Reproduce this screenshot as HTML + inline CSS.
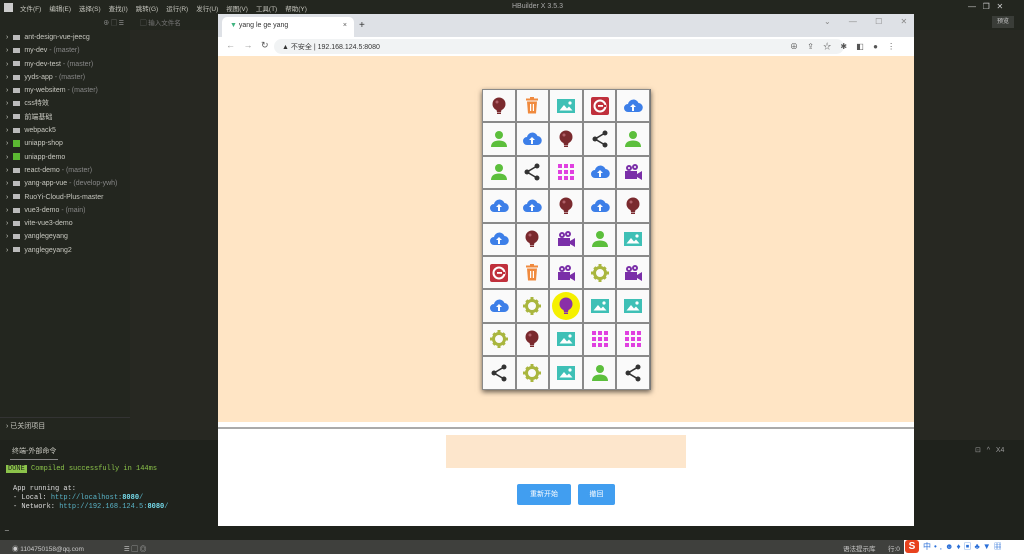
<!DOCTYPE html>
<html><head><meta charset="utf-8"><style>
*{margin:0;padding:0;box-sizing:border-box}
body{width:1024px;height:554px;overflow:hidden;background:#272822;font-family:"Liberation Sans","Noto Sans CJK SC",sans-serif;font-size:7px;color:#c8c8c0;position:relative}
.a{position:absolute}
.menu{left:0;top:0;width:1024px;height:14px;background:#23261f}
.menu span{margin-right:8px}
.side{left:0;top:14px;width:130px;height:426px;background:#23261f}
.tree div{height:13.3px;line-height:13.3px;padding-left:6px;white-space:nowrap}
.tree i{display:inline-block;width:7px;height:5px;background:#bbb;margin:0 4px 0 5px;vertical-align:middle}
.tree i.g{background:#5cb832;height:7px}
.tree b{font-weight:normal;color:#888}
.cell{position:absolute;width:33.6px;height:33.4px;background:#fafafa;border:1px solid #8a8a8a;display:flex;align-items:center;justify-content:center}
.cell svg{width:20px;height:20px}
.mono{font-family:"Liberation Mono",monospace;font-size:7px}
</style></head><body>
<svg width="0" height="0" style="position:absolute"><defs>
<symbol id="bulb" viewBox="0 0 20 20"><circle cx="10" cy="8" r="6.5" fill="#7a2a2e"/><path d="M7 12h6l-1 4H8z" fill="#7a2a2e"/><rect x="8" y="16.5" width="4" height="1.5" fill="#7a2a2e"/><circle cx="8" cy="6" r="1.5" fill="#b06068"/></symbol>
<symbol id="trash" viewBox="0 0 20 20"><rect x="4" y="2.5" width="12" height="2" fill="#f08a3e"/><rect x="8" y="1" width="4" height="2" fill="#f08a3e"/><path d="M5 5.5h10l-1 12H6z" fill="#f08a3e"/><rect x="8" y="8" width="1.2" height="7" fill="#fff"/><rect x="10.8" y="8" width="1.2" height="7" fill="#fff"/></symbol>
<symbol id="img" viewBox="0 0 20 20"><rect x="1" y="3" width="18" height="14" fill="#3fc0b6"/><path d="M3.5 14.5l4.5-5.5 3 3.5 2-2 3.5 4z" fill="#fff"/><circle cx="14" cy="7" r="1.6" fill="#fff"/></symbol>
<symbol id="ec" viewBox="0 0 20 20"><rect x="1" y="1" width="18" height="18" rx="2" fill="#c0303c"/><circle cx="10" cy="10" r="5.5" fill="none" stroke="#fff" stroke-width="2"/><rect x="10" y="9" width="6" height="2" fill="#c0303c"/><rect x="8" y="9" width="5" height="1.8" fill="#fff"/></symbol>
<symbol id="cloud" viewBox="0 0 20 20"><path d="M5 16a4 4 0 010-8 5.5 5.5 0 0110.5-1A4.5 4.5 0 0115 16z" fill="#3d7fe8"/><path d="M10 8l3 3h-2v4H9v-4H7z" fill="#fff"/></symbol>
<symbol id="person" viewBox="0 0 20 20"><circle cx="10" cy="6" r="4" fill="#5cbf3c"/><path d="M2 18c0-5 4-6.5 8-6.5s8 1.5 8 6.5z" fill="#5cbf3c"/></symbol>
<symbol id="share" viewBox="0 0 20 20"><path d="M15 4L5 10l10 6" fill="none" stroke="#333" stroke-width="1.6"/><circle cx="15" cy="4" r="2.5" fill="#333"/><circle cx="5" cy="10" r="2.5" fill="#333"/><circle cx="15" cy="16" r="2.5" fill="#333"/></symbol>
<symbol id="grid" viewBox="0 0 20 20"><path d="M2 2h4v4H2zM8 2h4v4H8zM14 2h4v4h-4zM2 8h4v4H2zM8 8h4v4H8zM14 8h4v4h-4zM2 14h4v4H2zM8 14h4v4H8zM14 14h4v4h-4z" fill="#e040e0"/></symbol>
<symbol id="cam" viewBox="0 0 20 20"><circle cx="6" cy="6" r="3" fill="#7a2fa8"/><circle cx="12" cy="5" r="3" fill="#7a2fa8"/><rect x="2" y="9" width="12" height="8" fill="#7a2fa8"/><path d="M14 12l5-3v9l-5-3z" fill="#7a2fa8"/><circle cx="6" cy="6" r="1" fill="#fff"/><circle cx="12" cy="5" r="1" fill="#fff"/></symbol>
<symbol id="gear" viewBox="0 0 20 20"><circle cx="10" cy="10" r="5.5" fill="none" stroke="#a9b63e" stroke-width="3"/><path d="M8.5 1h3v3h-3zM8.5 16h3v3h-3zM1 8.5h3v3H1zM16 8.5h3v3h-3zM3.3 5.4l2.1-2.1 2.1 2.1-2.1 2.1zM12.5 14.6l2.1-2.1 2.1 2.1-2.1 2.1zM12.5 5.4l2.1-2.1 2.1 2.1-2.1 2.1zM3.3 14.6l2.1-2.1 2.1 2.1-2.1 2.1z" fill="#a9b63e"/></symbol>
<symbol id="pbulb" viewBox="0 0 20 20"><circle cx="10" cy="8" r="6.5" fill="#8a2fa8"/><path d="M7 12h6l-1 4H8z" fill="#8a2fa8"/><rect x="8" y="16.5" width="4" height="1.5" fill="#8a2fa8"/></symbol>
</defs></svg>

<div class="a menu"><div class="a" style="left:4px;top:3px;width:9px;height:9px;background:#ccc"></div><div class="a" style="left:20px;top:3px;font-size:6.5px"><span>文件(F)</span><span>编辑(E)</span><span>选择(S)</span><span>查找(I)</span><span>跳转(G)</span><span>运行(R)</span><span>发行(U)</span><span>视图(V)</span><span>工具(T)</span><span>帮助(Y)</span></div>
<div class="a" style="left:512px;top:3px;color:#aaa">HBuilder X 3.5.3</div><div class="a" style="left:968px;top:2px;color:#ccc;font-size:8px">—&nbsp;&nbsp;&nbsp;❐&nbsp;&nbsp;&nbsp;✕</div></div>
<div class="a" style="left:0;top:14px;width:218px;height:16px;background:#23261f;color:#aaa;font-size:8px;padding:3px 8px;word-spacing:9px">⍐ ▢ ‹ › ☆ ⓔ</div>
<div class="a" style="left:140px;top:17px;color:#777;font-size:6.5px">▢ 输入文件名</div>
<div class="a" style="left:914px;top:14px;width:110px;height:16px;background:#23261f"></div>
<div class="a" style="left:992px;top:16px;width:22px;height:12px;background:#3a3d38;color:#ccc;font-size:6px;text-align:center;line-height:12px">预览</div>
<div class="a side"><div style="text-align:right;padding:4px 6px;color:#999;font-size:6px">⊕ ▢ ☰</div>
<div class="tree">
<div>›<i></i>ant-design-vue-jeecg</div><div>›<i></i>my-dev <b>- (master)</b></div><div>›<i></i>my-dev-test <b>- (master)</b></div><div>›<i></i>yyds-app <b>- (master)</b></div><div>›<i></i>my-websitem <b>- (master)</b></div><div>›<i></i>css特效</div><div>›<i></i>前端基础</div><div>›<i></i>webpack5</div><div>›<i class="g"></i>uniapp-shop</div><div>›<i class="g"></i>uniapp-demo</div><div>›<i></i>react-demo <b>- (master)</b></div><div>›<i></i>yang-app-vue <b>- (develop-ywh)</b></div><div>›<i></i>RuoYi-Cloud-Plus-master</div><div>›<i></i>vue3-demo <b>- (main)</b></div><div>›<i></i>vite-vue3-demo</div><div>›<i></i>yanglegeyang</div><div>›<i></i>yanglegeyang2</div>
</div>
<div class="a" style="left:0;top:403px;width:130px;height:14px;border-top:1px solid #333;padding:3px 6px">› 已关闭项目</div></div>
<div class="a" style="left:0;top:440px;width:1024px;height:100px;background:#1f221c"></div>
<div class="a" style="left:10px;top:446px;border-bottom:1px solid #888;padding:0 2px 3px">终端-外部命令</div>
<div class="a mono" style="left:6px;top:465px;color:#8bc34a"><span style="background:#8bc34a;color:#1f221c;padding:0 2px">DONE</span> Compiled successfully in 144ms</div>
<div class="a mono" style="left:13px;top:485px;color:#ddd;line-height:9px">App running at:<br>- Local:   <span style="color:#5ab4c8">http://localhost:<b style="color:#7de">8080</b>/</span><br>- Network: <span style="color:#5ab4c8">http://192.168.124.5:<b style="color:#7de">8080</b>/</span></div>
<div class="a" style="left:5px;top:524px;color:#ddd">_</div>
<div class="a" style="left:975px;top:446px;color:#999;font-size:7px">⊡&nbsp;&nbsp;&nbsp;^&nbsp;&nbsp;&nbsp;X4</div>
<div class="a" style="left:0;top:540px;width:1024px;height:14px;background:#3f403d;color:#ccc;padding:3px 12px;font-size:6.5px">◉ 1104750158@qq.com<span style="margin-left:40px">☰ ▢ ◎</span><span style="position:absolute;left:843px">语法提示库</span><span style="position:absolute;left:888px">行:0</span></div>
<div class="a" style="left:904px;top:540px;width:120px;height:14px;background:#fff"></div>
<div class="a" style="left:905px;top:540px;width:14px;height:13px;background:#e8421e;border-radius:3px;color:#fff;font-weight:bold;font-size:10px;text-align:center;line-height:13px">S</div>
<div class="a" style="left:923px;top:541px;color:#2a6fd8;font-size:8px;letter-spacing:3px">中•,☻♦▣♣▼▦</div>

<div class="a" style="left:218px;top:14px;width:696px;height:512px;background:#fff"></div>
<div class="a" style="left:218px;top:14px;width:696px;height:23px;background:#dee1e6"></div>
<div class="a" style="left:222px;top:17px;width:132px;height:20px;background:#fff;border-radius:5px 5px 0 0;padding:5px 8px;color:#333;font-size:7px"><span style="color:#3fb37f">▼</span> yang le ge yang<span style="position:absolute;right:7px;color:#555">×</span></div>
<div class="a" style="left:359px;top:20px;color:#333;font-size:10px">+</div>
<div class="a" style="left:824px;top:17px;color:#888;font-size:8px;word-spacing:16px">⌄ — ☐ ✕</div>
<div class="a" style="left:218px;top:37px;width:696px;height:19px;background:#fff"></div>
<div class="a" style="left:226px;top:40px;color:#999;font-size:9px;word-spacing:6px">← → <span style="color:#555">↻</span></div>
<div class="a" style="left:274px;top:39px;width:570px;height:15px;background:#f1f3f4;border-radius:8px;padding:3px 8px;color:#333;font-size:7px">▲ 不安全 | 192.168.124.5:8080</div>
<div class="a" style="left:790px;top:41px;color:#555;font-size:8px;word-spacing:7px">⊕ ⇪ ☆ ✱ ◧ ● ⋮</div>
<div class="a" style="left:218px;top:56px;width:696px;height:366px;background:#ffe5c5"></div>
<div class="a" style="left:218px;top:427px;width:696px;height:1.5px;background:#aaa"></div>
<div class="a" style="left:446px;top:435px;width:240px;height:33px;background:#fde6cc"></div>
<div class="a" style="left:517px;top:484px;width:54px;height:21px;background:#419ef0;border-radius:2px;color:#fff;text-align:center;line-height:21px;font-size:7px">重新开始</div>
<div class="a" style="left:578px;top:484px;width:37px;height:21px;background:#419ef0;border-radius:2px;color:#fff;text-align:center;line-height:21px;font-size:7px">撤回</div>

<div class="a" style="left:482px;top:89px;width:169px;height:301px;box-shadow:0 2px 5px rgba(0,0,0,.6);background:#777"></div>
<div class="a" style="left:482px;top:89px">
<div class="cell" style="left:0;top:0"><svg><use href="#bulb"/></svg></div><div class="cell" style="left:33.6px;top:0"><svg><use href="#trash"/></svg></div><div class="cell" style="left:67.2px;top:0"><svg><use href="#img"/></svg></div><div class="cell" style="left:100.8px;top:0"><svg><use href="#ec"/></svg></div><div class="cell" style="left:134.4px;top:0"><svg><use href="#cloud"/></svg></div>
<div class="cell" style="left:0;top:33.4px"><svg><use href="#person"/></svg></div><div class="cell" style="left:33.6px;top:33.4px"><svg><use href="#cloud"/></svg></div><div class="cell" style="left:67.2px;top:33.4px"><svg><use href="#bulb"/></svg></div><div class="cell" style="left:100.8px;top:33.4px"><svg><use href="#share"/></svg></div><div class="cell" style="left:134.4px;top:33.4px"><svg><use href="#person"/></svg></div>
<div class="cell" style="left:0;top:66.8px"><svg><use href="#person"/></svg></div><div class="cell" style="left:33.6px;top:66.8px"><svg><use href="#share"/></svg></div><div class="cell" style="left:67.2px;top:66.8px"><svg><use href="#grid"/></svg></div><div class="cell" style="left:100.8px;top:66.8px"><svg><use href="#cloud"/></svg></div><div class="cell" style="left:134.4px;top:66.8px"><svg><use href="#cam"/></svg></div>
<div class="cell" style="left:0;top:100.2px"><svg><use href="#cloud"/></svg></div><div class="cell" style="left:33.6px;top:100.2px"><svg><use href="#cloud"/></svg></div><div class="cell" style="left:67.2px;top:100.2px"><svg><use href="#bulb"/></svg></div><div class="cell" style="left:100.8px;top:100.2px"><svg><use href="#cloud"/></svg></div><div class="cell" style="left:134.4px;top:100.2px"><svg><use href="#bulb"/></svg></div>
<div class="cell" style="left:0;top:133.6px"><svg><use href="#cloud"/></svg></div><div class="cell" style="left:33.6px;top:133.6px"><svg><use href="#bulb"/></svg></div><div class="cell" style="left:67.2px;top:133.6px"><svg><use href="#cam"/></svg></div><div class="cell" style="left:100.8px;top:133.6px"><svg><use href="#person"/></svg></div><div class="cell" style="left:134.4px;top:133.6px"><svg><use href="#img"/></svg></div>
<div class="cell" style="left:0;top:167px"><svg><use href="#ec"/></svg></div><div class="cell" style="left:33.6px;top:167px"><svg><use href="#trash"/></svg></div><div class="cell" style="left:67.2px;top:167px"><svg><use href="#cam"/></svg></div><div class="cell" style="left:100.8px;top:167px"><svg><use href="#gear"/></svg></div><div class="cell" style="left:134.4px;top:167px"><svg><use href="#cam"/></svg></div>
<div class="cell" style="left:0;top:200.4px"><svg><use href="#cloud"/></svg></div><div class="cell" style="left:33.6px;top:200.4px"><svg><use href="#gear"/></svg></div><div class="cell" style="left:67.2px;top:200.4px"><div style="position:absolute;width:28px;height:28px;border-radius:50%;background:#f5f000;left:2px;top:2px"></div><svg style="position:relative"><use href="#pbulb"/></svg></div><div class="cell" style="left:100.8px;top:200.4px"><svg><use href="#img"/></svg></div><div class="cell" style="left:134.4px;top:200.4px"><svg><use href="#img"/></svg></div>
<div class="cell" style="left:0;top:233.8px"><svg><use href="#gear"/></svg></div><div class="cell" style="left:33.6px;top:233.8px"><svg><use href="#bulb"/></svg></div><div class="cell" style="left:67.2px;top:233.8px"><svg><use href="#img"/></svg></div><div class="cell" style="left:100.8px;top:233.8px"><svg><use href="#grid"/></svg></div><div class="cell" style="left:134.4px;top:233.8px"><svg><use href="#grid"/></svg></div>
<div class="cell" style="left:0;top:267.2px"><svg><use href="#share"/></svg></div><div class="cell" style="left:33.6px;top:267.2px"><svg><use href="#gear"/></svg></div><div class="cell" style="left:67.2px;top:267.2px"><svg><use href="#img"/></svg></div><div class="cell" style="left:100.8px;top:267.2px"><svg><use href="#person"/></svg></div><div class="cell" style="left:134.4px;top:267.2px"><svg><use href="#share"/></svg></div>
</div>
</body></html>
